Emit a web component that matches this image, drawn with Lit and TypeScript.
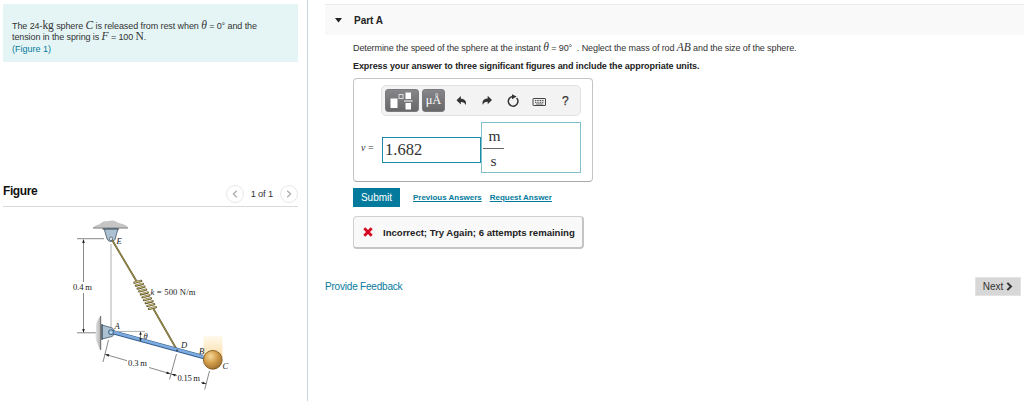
import { LitElement, html, svg, css } from "lit";
import { customElement } from "lit/decorators.js";

@customElement("spring-figure")
class SpringFigure extends LitElement {
  static styles = css`
    :host { display: block; }
    svg { display: block; }
    text { font-family: "Liberation Serif", serif; font-size: 8.6px; fill: #222; }
    .it { font-style: italic; }
    .dim { stroke: #555; stroke-width: 0.7; fill: none; }
    .thin { stroke: #999; stroke-width: 0.8; fill: none; }
    .head { fill: #222; }
  `;

  coils() {
    const n = 10;
    return Array.from({ length: n }, (_, i) => {
      const x = 137.8 + (14.6 * i) / (n - 1);
      const y = 281.8 + (26.2 * i) / (n - 1);
      return svg`
        <line x1=${x - 3.4} y1=${y + 0.9} x2=${x + 3.4} y2=${y - 0.9} stroke="#5f5426" stroke-width="2.3" stroke-linecap="round"/>
        <line x1=${x - 3.1} y1=${y + 0.6} x2=${x + 3.1} y2=${y - 1.1} stroke="#c9bd83" stroke-width="1.1" stroke-linecap="round"/>`;
    });
  }

  render() {
    return html`<svg width="170" height="185" viewBox="70 210 170 185">
      <defs>
        <radialGradient id="ball" cx="0.38" cy="0.32" r="0.7">
          <stop offset="0" stop-color="#f5d79b"/><stop offset="0.5" stop-color="#d5a04c"/><stop offset="1" stop-color="#a07030"/>
        </radialGradient>
        <linearGradient id="glow" x2="0" y2="1">
          <stop offset="0" stop-color="#fff9ec"/><stop offset="1" stop-color="#fbdfaa"/>
        </linearGradient>
        <linearGradient id="wall" x2="1" y2="0">
          <stop offset="0" stop-color="#e6e6e6"/><stop offset="1" stop-color="#b2b2b2"/>
        </linearGradient>
      </defs>
      <path d="M93 227.8C95 225 99 225 101 223C105 220 108 222 111 220.5C115 220 116 222 119 223C123 224 127 225 128 227.8Z" fill="#c5c5c5"/>
      <path d="M93 228H128" stroke="#777" stroke-width="1"/>
      <path d="M103.5 228.7H118L115.7 237C115.5 243 107 243 106.5 237L104.5 230Z" fill="#acc2d3" stroke="#465663" stroke-width="0.8"/>
      <path d="M102.5 229H119" stroke="#53616d" stroke-width="1.2"/>
      <path class="dim" d="M77 238.7H104M83.5 240V282M83.5 293V332M77 332.8H97"/>
      <path class="head" d="M83.5 239l-1.3 4h2.6zM83.5 333l-1.3-4h2.6z"/>
      <path class="thin" d="M111 244V327"/>
      <path d="M111.5 239L137 282M153.5 309L177 350" stroke="#655a27" stroke-width="1.8"/>
      <path d="M111.5 239L137 282M153.5 309L177 350" stroke="#b1a361" stroke-width="0.7"/>
      ${this.coils()}
      <circle cx="111" cy="238.8" r="1.8" fill="#e0e8ef" stroke="#465663" stroke-width="0.7"/>
      <path d="M100.5 316C98 318 98 321 96.5 323C95 327 97 330 95.5 334C95 339 97 342 98 345C99 347 99 349 100.5 350Z" fill="url(#wall)"/>
      <path d="M100.7 316V350" stroke="#666" stroke-width="1"/>
      <path d="M102 325L110 327.3C116 328 116 336.5 110 337L102 339Z" fill="#acc2d3" stroke="#465663" stroke-width="0.8"/>
      <path d="M102 324V340" stroke="#465663" stroke-width="1.3"/>
      <path d="M112 332L205 357.5" stroke="#315e91" stroke-width="4" stroke-linecap="round"/>
      <path d="M112 331.8L205 357.2" stroke="#7facdf" stroke-width="2.6" stroke-linecap="round"/>
      <circle cx="111" cy="332.2" r="2.5" fill="#92bad9" stroke="#38546b" stroke-width="0.8"/>
      <circle cx="111" cy="332.2" r="0.8" fill="#eee"/>
      <path class="thin" d="M115 331.4H145"/>
      <path class="dim" d="M140.5 333V340"/>
      <path class="head" d="M140.5 331.5l-1.3 3.2h2.6zM140.5 341.5l-1.3-3.2h2.6z"/>
      <rect x="203.5" y="336" width="19" height="21" fill="url(#glow)"/>
      <circle cx="212.8" cy="359.8" r="9.4" fill="url(#ball)" stroke="#795016" stroke-width="0.8"/>
      <circle cx="177" cy="350.3" r="0.9" fill="#333"/>
      <path class="dim" d="M108.5 340L103 362M176.5 354L169.5 379.5M209.5 371L204.7 389.5M105 354.3L127 360.7M149 367.5L170.5 373.8L177 375.7M201 382.5L206 384"/>
      <path class="head" d="M105 354.3l4.3-.1l-.8 2.5zM170.5 373.8l-4.3.1l.8-2.5zM171.5 374l4.3-.1l-.8 2.5zM206.3 384l-4.3.1l.8-2.5z"/>
      <text x="73" y="290" textLength="19">0.4 m</text>
      <text x="128" y="366.3" textLength="19">0.3 m</text>
      <text x="177.5" y="381.3" textLength="22.5">0.15 m</text>
      <text x="150.5" y="294.5" textLength="45"><tspan class="it">k</tspan> = 500 N/m</text>
      <text class="it" x="116.5" y="243.7">E</text>
      <text class="it" x="114.5" y="328.5">A</text>
      <text class="it" x="143.5" y="339">θ</text>
      <text class="it" x="181" y="348">D</text>
      <text class="it" x="199" y="354">B</text>
      <text class="it" x="222.5" y="368.8">C</text>
    </svg>`;
  }
}

@customElement("app-root")
class AppRoot extends LitElement {
  static styles = css`
    :host { display: flex; width: 1024px; height: 401px; overflow: hidden; background: #fff; color: #333;
      font-family: "Liberation Sans", Arial, sans-serif; font-size: 9px; }
    * { box-sizing: border-box; }
    svg { display: block; }
    .left { width: 308px; flex: none; border-right: 1px solid #cbd3de; padding: 4px 9px 0 3px; }
    .prompt { background: #e5f5f6; height: 58px; padding: 17px 9px 0; line-height: 11.3px; white-space: nowrap; }
    .l1, .l2, .l3 { display: block; height: 11.3px; }
    .l1 { letter-spacing: -0.09px; }
    .l2 { letter-spacing: -0.1px; }
    .l3 { color: #067a9c; }
    .m { font-family: "Liberation Serif", serif; font-size: 11.5px; line-height: 1px; }
    .i { font-style: italic; }
    .fighead { display: flex; height: 30px; margin-top: 115px; border-bottom: 1px solid #d9d9d9; justify-content: space-between; }
    .figtitle { color: #111; font-weight: bold; font-size: 12px; letter-spacing: -0.4px; line-height: 29px; }
    .pager { display: flex; align-items: center; gap: 7px; font-size: 9.3px; letter-spacing: -0.15px; padding-top: 4px; height: 29px; }
    .circle { width: 18px; height: 18px; border: 1px solid #e7e7e7; border-radius: 50%; display: flex; align-items: center; justify-content: center; }
    .fig { padding: 3px 0 0 67px; }
    .right { flex: 1; padding: 4px 0 0 17px; min-width: 0; }
    .part { height: 31px; background: #f9f9f9; border-top: 1px solid #ececec; display: flex; align-items: center; padding-left: 10px; gap: 12px; color: #222; font-weight: bold; font-size: 10px; }
    .body { padding-left: 28px; }
    .question { height: 22px; line-height: 22px; margin-top: 2px; white-space: nowrap; letter-spacing: -0.1px; }
    .express { height: 14px; line-height: 14px; font-weight: bold; color: #222; white-space: nowrap; letter-spacing: -0.08px; }
    .answer { width: 240px; height: 104px; margin-top: 5px; border: 1px solid #c4c4c4; border-bottom-color: #aaa; border-radius: 4px; padding: 6px 0 0 7px; }
    .tools { width: 200px; height: 31px; margin-left: 20px; border: 1px solid #e2e2e2; border-radius: 5px; background: #f3f3f3; display: flex; align-items: center; padding-left: 3px; }
    .tbtn { height: 23px; border-radius: 3px; background: linear-gradient(#86868a, #68686b); border: 1px solid #7b7b7e; display: flex; align-items: center; justify-content: center; color: #fff; }
    .t1 { width: 34px; }
    .t2 { width: 23px; margin-left: 3px; font-family: "Liberation Serif", serif; font-size: 12.5px; }
    .icons { display: flex; align-items: center; }
    .fields { display: flex; align-items: flex-start; margin-top: 6px; font-family: "Liberation Serif", serif; }
    .veq { width: 21px; padding-top: 19px; font-size: 10px; white-space: nowrap; line-height: 14px; }
    .value { width: 99px; height: 26px; margin-top: 15px; border: 1px solid #1a8ba9; padding-left: 2px; line-height: 24px; font-size: 16.5px; }
    .unit { width: 100px; height: 51px; border: 1px solid #82bfcd; font-size: 16px; padding: 3px 0 0 1px; }
    .frac { width: 21px; text-align: center; font-size: 15.5px; }
    .num { height: 23px; line-height: 20px; border-bottom: 1px solid #666; padding-left: 2px; }
    .den { line-height: 24px; }
    .actions { display: flex; align-items: center; margin-top: 6px; height: 19px; color: #047a9c; font-weight: bold; font-size: 8px; }
    .submit { width: 47px; height: 19px; line-height: 19px; background: #047a9c; color: #fff; text-align: center; font-weight: normal; font-size: 10px; margin-right: 13px; }
    .link { text-decoration: underline; margin-right: 8px; white-space: nowrap; letter-spacing: -0.02px; }
    .result { width: 231px; height: 33px; margin-top: 9px; border: 1px solid #d0d0d0; border-right: 2px solid #c5c5c5; border-bottom: 2px solid #c5c5c5; border-radius: 4px; background: #f9f9f9; display: flex; align-items: center; padding-left: 9px; gap: 10px; color: #222; font-weight: bold; font-size: 9.6px; letter-spacing: -0.02px; white-space: nowrap; }
    .bottom { display: flex; justify-content: space-between; align-items: center; margin-top: 28px; height: 19px; color: #067a9c; font-size: 10px; }
    .feedback { letter-spacing: -0.2px; }
    .next { width: 46px; height: 19px; background: #d7d7d7; border: 1px solid #e3e3e3; color: #333; display: flex; align-items: center; justify-content: center; gap: 3px; margin-right: 3px; }
  `;

  render() {
    return html`
      <div class="left">
        <div class="prompt">
          <span class="l1">The 24-<span class="m">kg</span> sphere <span class="m i">C</span> is released from rest when <span class="m i">θ</span> = 0° and the</span>
          <span class="l2">tension in the spring is <span class="m i">F</span> = 100 <span class="m">N</span>.</span>
          <span class="l3">(Figure 1)</span>
        </div>
        <div class="fighead">
          <div class="figtitle">Figure</div>
          <div class="pager">
            <span class="circle"><svg width="6" height="8" viewBox="0 0 6 8"><path d="M4.8 .7L1.4 4L4.8 7.3" fill="none" stroke="#aaa" stroke-width="1.2"/></svg></span>
            <span>1 of 1</span>
            <span class="circle"><svg width="6" height="8" viewBox="0 0 6 8"><path d="M1.2 .7L4.6 4L1.2 7.3" fill="none" stroke="#aaa" stroke-width="1.2"/></svg></span>
          </div>
        </div>
        <div class="fig"><spring-figure></spring-figure></div>
      </div>
      <div class="right">
        <div class="part"><svg width="7" height="5" viewBox="0 0 7 5"><path d="M0 0H7L3.5 4.6Z" fill="#222"/></svg><span>Part A</span></div>
        <div class="body">
          <div class="question">Determine the speed of the sphere at the instant <span class="m i">θ</span> = 90° &nbsp;. Neglect the mass of rod <span class="m i">AB</span> and the size of the sphere.</div>
          <div class="express">Express your answer to three significant figures and include the appropriate units.</div>
          <div class="answer">
            <div class="tools">
              <div class="tbtn t1"><svg width="24" height="19" viewBox="0 0 24 19"><path d="M0.5 7.5H7.5V17H0.5ZM15.5 1.5H21V8H15.5ZM15.5 12H21V18.5H15.5Z" fill="#fff"/><path d="M14 10H22.5" stroke="#fff" stroke-width="1"/><rect x="9" y="3.5" width="4" height="4" fill="none" stroke="#ddd"/></svg></div>
              <div class="tbtn t2">μÅ</div>
              <div class="icons"><svg width="132" height="29" viewBox="445 86 132 29">
                <path d="M456.5 100.3L460.8 96V98.8C464.5 98.8 467 101 465.6 105.3C465 103 463.5 102 460.8 102V104.5Z" fill="#333"/>
                <path d="M492 100L487.7 95.8V98.5C484 98.5 481.5 101 482.9 105C483.5 102.8 485 101.8 487.7 101.8V104.2Z" fill="#333"/>
                <path d="M516.6 98A4.8 4.8 0 1 1 512.4 96.6" fill="none" stroke="#333" stroke-width="1.5"/><path d="M512 94.2L516.6 96.6L512 99.2Z" fill="#333"/>
                <rect x="533" y="98.5" width="12.5" height="7" rx=".5" fill="#eee" stroke="#444"/><path d="M535 100.5H544M535 102.3H544" stroke="#444" stroke-width="1" stroke-dasharray="1 .7"/><path d="M536 104H543" stroke="#444" stroke-width=".8"/>
                <text x="562" y="105" font-size="12" fill="#333" stroke="#333" stroke-width=".25">?</text>
              </svg></div>
            </div>
            <div class="fields">
              <div class="veq"><i>v</i> =</div>
              <div class="value">1.682</div>
              <div class="unit"><div class="frac"><div class="num">m</div><div class="den">s</div></div></div>
            </div>
          </div>
          <div class="actions"><div class="submit">Submit</div><span class="link">Previous Answers</span><span class="link">Request Answer</span></div>
          <div class="result"><svg width="10" height="10" viewBox="0 0 10 10"><path d="M1.3 1.3L8.7 8.7M8.7 1.3L1.3 8.7" stroke="#d3071f" stroke-width="2.8"/></svg><span>Incorrect; Try Again; 6 attempts remaining</span></div>
        </div>
        <div class="bottom"><span class="feedback">Provide Feedback</span><div class="next"><span>Next</span><svg width="7" height="9" viewBox="0 0 7 9"><path d="M1.3 .9L5 4.5L1.3 8.1" fill="none" stroke="#333" stroke-width="2"/></svg></div></div>
      </div>`;
  }
}
